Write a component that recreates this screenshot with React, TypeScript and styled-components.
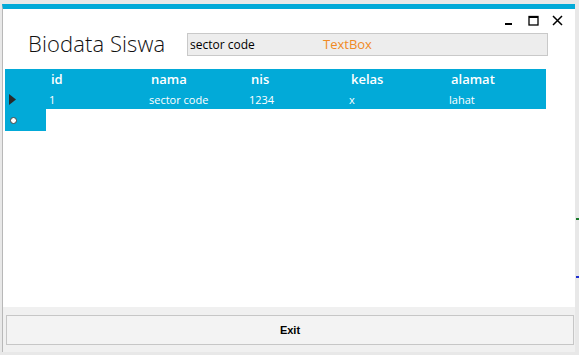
import styled, { createGlobalStyle } from 'styled-components'

const GlobalStyle = createGlobalStyle`
  html, body {
    margin: 0;
    padding: 0;
    background: #e8e8e8;
    font-family: "Open Sans", "Liberation Sans", sans-serif;
  }
`

const CYAN = '#02aad8'

export const Desktop = styled.div`
  width: 579px;
  height: 355px;
  padding-top: 4px;
  box-sizing: border-box;
  display: flex;
  background: #e8e8e8;
`

export const Window = styled.div`
  margin-left: 2px;
  width: 573px;
  height: 348px;
  box-sizing: border-box;
  border-top: 5px solid ${CYAN};
  border-left: 1px solid #b8b8b8;
  background: #fff;
  display: flex;
  flex-direction: column;
`

export const Edge = styled.div`
  flex: 1;
  position: relative;
`

export const EdgeMark = styled.div<{ $top: number; $color: string }>`
  position: absolute;
  left: 1px;
  width: 3px;
  height: 2px;
  top: ${p => p.$top}px;
  background: ${p => p.$color};
`

export const Controls = styled.div`
  height: 16px;
  display: flex;
  justify-content: flex-end;
  align-items: center;
  gap: 12px;
  padding: 3px 12px 0 0;
`

export const CtrlBtn = styled.span`
  width: 12px;
  height: 12px;
  display: flex;
  align-items: center;
  justify-content: center;
`

export const HeaderRow = styled.div`
  display: flex;
  align-items: center;
  height: 30px;
  padding-left: 25px;
`

export const Title = styled.h1`
  margin: 0;
  font-family: "Open Sans", sans-serif;
  font-weight: 300;
  font-size: 22px;
  color: #111;
  width: 159px;
  letter-spacing: 0.1px;
`

export const TextBox = styled.div`
  width: 361px;
  height: 23px;
  box-sizing: border-box;
  border: 1px solid #c9c9c9;
  background: #ededed;
  display: flex;
  align-items: center;
  padding-left: 2px;
  font-size: 12px;
  color: #000;
  margin-top: 2px;
`

export const TextValue = styled.span`
  width: 133px;
`

export const Placeholder = styled.span`
  color: #f08a24;
  font-size: 13px;
`

export const Grid = styled.div`
  margin: 11px 0 0 2px;
  width: 541px;
  color: #fff;
`

export const GridRow = styled.div<{ $h: number }>`
  display: grid;
  grid-template-columns: 41px repeat(5, 100px);
  height: ${p => p.$h}px;
  align-items: center;
  background: ${CYAN};
`

export const HeadCell = styled.div`
  font-size: 13px;
  font-weight: 600;
  padding-left: 5px;
`

export const Cell = styled.div`
  font-size: 11px;
  padding-left: 3px;
`

export const RowHeader = styled.div`
  display: flex;
  align-items: center;
  padding-left: 3px;
  height: 100%;
`

export const NewRow = styled.div`
  width: 41px;
  height: 22px;
  background: ${CYAN};
  display: flex;
  align-items: center;
  padding-left: 5px;
  box-sizing: border-box;
`

export const Dot = styled.span`
  width: 5px;
  height: 5px;
  border-radius: 50%;
  background: #fff;
  border: 1px solid #444;
`

export const Footer = styled.div`
  margin-top: auto;
  height: 45px;
  background: #f0f0f0;
  padding: 8px 1px 7px 3px;
  box-sizing: border-box;
  display: flex;
`

export const ExitButton = styled.button`
  flex: 1;
  border: 1px solid #c6c6c6;
  background: #f3f3f3;
  font-family: "Liberation Sans", sans-serif;
  font-weight: bold;
  font-size: 11px;
  color: #000;
  padding: 0;
`

const columns = ['id', 'nama', 'nis', 'kelas', 'alamat']
const data = ['1', 'sector code', '1234', 'x', 'lahat']

function App() {
  return (
    <>
      <GlobalStyle />
      <Desktop>
        <Window>
          <Controls>
            <CtrlBtn>
              <svg width="10" height="12" viewBox="0 0 10 12"><rect x="1" y="9" width="7" height="2" fill="#000" /></svg>
            </CtrlBtn>
            <CtrlBtn>
              <svg width="11" height="11" viewBox="0 0 11 11"><rect x="1" y="1.5" width="9" height="8.5" fill="none" stroke="#000" strokeWidth="1.3" /><rect x="1" y="1" width="9" height="2" fill="#000" /></svg>
            </CtrlBtn>
            <CtrlBtn>
              <svg width="11" height="11" viewBox="0 0 11 11"><path d="M1 1 L10 10 M10 1 L1 10" stroke="#000" strokeWidth="1.5" /></svg>
            </CtrlBtn>
          </Controls>
          <HeaderRow>
            <Title>Biodata Siswa</Title>
            <TextBox>
              <TextValue>sector code</TextValue>
              <Placeholder>TextBox</Placeholder>
            </TextBox>
          </HeaderRow>
          <Grid>
            <GridRow $h={20}>
              <div />
              {columns.map(c => <HeadCell key={c}>{c}</HeadCell>)}
            </GridRow>
            <GridRow $h={20}>
              <RowHeader>
                <svg width="9" height="13" viewBox="0 0 9 13"><path d="M1 1 L8 6.5 L1 12 Z" fill="#2a2a2a" /></svg>
              </RowHeader>
              {data.map((d, i) => <Cell key={i}>{d}</Cell>)}
            </GridRow>
            <NewRow><Dot /></NewRow>
          </Grid>
          <Footer>
            <ExitButton>Exit</ExitButton>
          </Footer>
        </Window>
        <Edge>
          <EdgeMark $top={214} $color="#1a7a2a" />
          <EdgeMark $top={272} $color="#2030d0" />
        </Edge>
      </Desktop>
    </>
  )
}

export default App
